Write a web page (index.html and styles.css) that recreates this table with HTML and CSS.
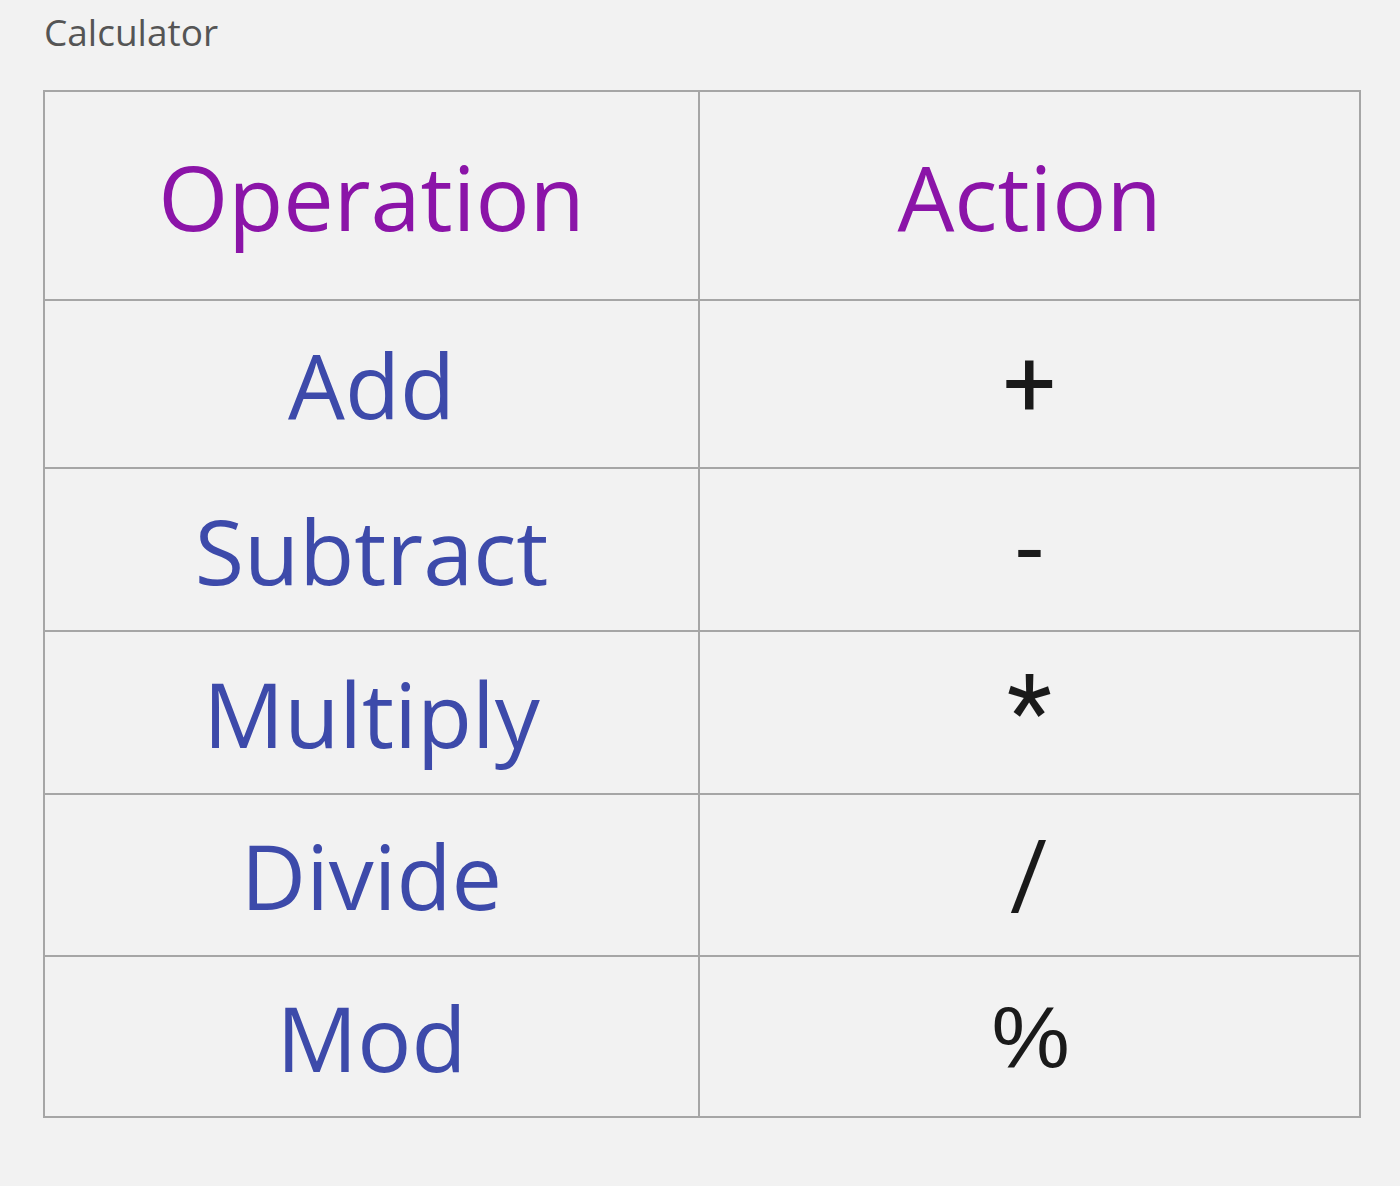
FILE: index.html
```html
<!DOCTYPE html>
<html lang="en">
<head>
<meta charset="utf-8">
<title>Calculator</title>
<link rel="stylesheet" href="styles.css">
</head>
<body>
<div class="page">
  <h1 class="title">Calculator</h1>
  <table class="calc">
    <thead>
      <tr class="row-head">
        <th class="col-op">Operation</th>
        <th class="col-act">Action</th>
      </tr>
    </thead>
    <tbody>
      <tr class="row-1"><td class="op">Add</td><td class="sym">+</td></tr>
      <tr class="row-2"><td class="op">Subtract</td><td class="sym sym-minus">-</td></tr>
      <tr class="row-3"><td class="op">Multiply</td><td class="sym sym-star">*</td></tr>
      <tr class="row-4"><td class="op">Divide</td><td class="sym">/</td></tr>
      <tr class="row-5"><td class="op">Mod</td><td class="sym sym-pct">%</td></tr>
    </tbody>
  </table>
</div>
</body>
</html>
```
FILE: styles.css
```css
html, body {
  margin: 0;
  padding: 0;
  background: #f2f2f2;
}
.page {
  padding: 10px 0 0 43px;
  font-family: "Open Sans", "Noto Sans", sans-serif;
}
.title {
  margin: 0 0 36px 1px;
  font-size: 37px;
  line-height: 44px;
  font-weight: 400;
  color: #555555;
}
.calc {
  border-collapse: collapse;
  table-layout: fixed;
  width: 1312px;
}
.calc th, .calc td {
  border: 2px solid #a6a6a6;
  text-align: center;
  vertical-align: middle;
  padding: 0;
  font-weight: 400;
}
.col-op { width: 653px; }
.col-act { width: 659px; }
.calc th {
  font-size: 90px;
  color: #8b14a8;
}
.op {
  font-size: 90px;
  color: #3d4aaa;
}
.sym {
  font-family: Roboto, "Liberation Sans", Arial, sans-serif;
  font-size: 94px;
  color: #1a1a1a;
}
.sym-minus {
  padding-top: 10px;
}
.sym-star {
  font-size: 104px;
}
.sym-pct {
  font-family: "Liberation Sans", Arial, sans-serif;
  font-size: 88px;
  letter-spacing: -2px;
}
.row-head { height: 209px; }
.row-1 { height: 168px; }
.row-2 { height: 163px; }
.row-3 { height: 163px; }
.row-4 { height: 162px; }
.row-5 { height: 161px; }
```
